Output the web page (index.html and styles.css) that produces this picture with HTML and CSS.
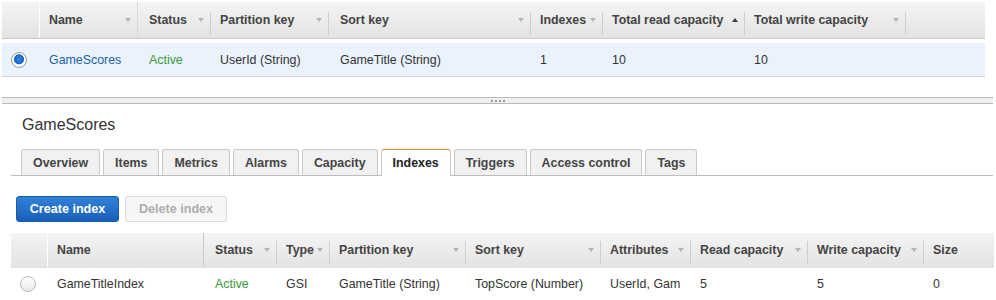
FILE: index.html
```html
<!DOCTYPE html>
<html>
<head>
<meta charset="utf-8">
<link rel="stylesheet" href="styles.css">
</head>
<body>
<div class="grid top">
  <div class="thead">
    <div class="c t0"><span class="lbl"></span><span class="sep white"></span></div>
    <div class="c t1"><span class="lbl">Name</span><span class="caret"></span><span class="sep full"></span></div>
    <div class="c t2"><span class="lbl p11">Status</span><span class="caret"></span><span class="sep"></span></div>
    <div class="c t3"><span class="lbl">Partition key</span><span class="caret"></span><span class="sep"></span></div>
    <div class="c t4"><span class="lbl p11">Sort key</span><span class="caret"></span><span class="sep"></span></div>
    <div class="c t5"><span class="lbl">Indexes</span><span class="caret"></span><span class="sep"></span></div>
    <div class="c t6"><span class="lbl">Total read capacity</span><span class="caret up"></span><span class="sep"></span></div>
    <div class="c t7"><span class="lbl">Total write capacity</span><span class="caret"></span><span class="sep"></span></div>
    <div class="c rest"></div>
  </div>
  <div class="trow selected">
    <div class="c t0"><span class="radio on"></span></div>
    <div class="c t1"><span class="val link">GameScores</span></div>
    <div class="c t2"><span class="val p11 ok">Active</span></div>
    <div class="c t3"><span class="val">UserId (String)</span></div>
    <div class="c t4"><span class="val p11">GameTitle (String)</span></div>
    <div class="c t5"><span class="val">1</span></div>
    <div class="c t6"><span class="val">10</span></div>
    <div class="c t7"><span class="val">10</span></div>
    <div class="c rest"></div>
  </div>
</div>

<div class="divider"><span class="grip"></span></div>

<h2 class="title">GameScores</h2>

<div class="tabs">
  <span class="tab">Overview</span>
  <span class="tab">Items</span>
  <span class="tab">Metrics</span>
  <span class="tab">Alarms</span>
  <span class="tab">Capacity</span>
  <span class="tab active">Indexes</span>
  <span class="tab">Triggers</span>
  <span class="tab">Access control</span>
  <span class="tab">Tags</span>
</div>

<div class="actions">
  <button class="btn primary">Create index</button>
  <button class="btn disabled">Delete index</button>
</div>

<div class="grid bottom">
  <div class="thead">
    <div class="c b0"><span class="lbl"></span><span class="sep white"></span></div>
    <div class="c b1"><span class="lbl">Name</span><span class="sep full gray"></span></div>
    <div class="c b2"><span class="lbl p11">Status</span><span class="caret"></span><span class="sep"></span></div>
    <div class="c b3"><span class="lbl">Type</span><span class="caret"></span><span class="sep"></span></div>
    <div class="c b4"><span class="lbl">Partition key</span><span class="caret"></span><span class="sep"></span></div>
    <div class="c b5"><span class="lbl">Sort key</span><span class="caret"></span><span class="sep"></span></div>
    <div class="c b6"><span class="lbl">Attributes</span><span class="caret"></span><span class="sep"></span></div>
    <div class="c b7"><span class="lbl">Read capacity</span><span class="caret"></span><span class="sep"></span></div>
    <div class="c b8"><span class="lbl">Write capacity</span><span class="caret"></span><span class="sep"></span></div>
    <div class="c rest"><span class="lbl">Size</span></div>
  </div>
  <div class="trow plain">
    <div class="c b0"><span class="radio"></span></div>
    <div class="c b1"><span class="val">GameTitleIndex</span></div>
    <div class="c b2"><span class="val p11 ok">Active</span></div>
    <div class="c b3"><span class="val">GSI</span></div>
    <div class="c b4"><span class="val">GameTitle (String)</span></div>
    <div class="c b5"><span class="val">TopScore (Number)</span></div>
    <div class="c b6"><span class="val">UserId, Gam</span></div>
    <div class="c b7"><span class="val">5</span></div>
    <div class="c b8"><span class="val">5</span></div>
    <div class="c rest"><span class="val">0</span></div>
  </div>
</div>
</body>
</html>
```

FILE: styles.css
```css
* { box-sizing: border-box; }
html, body { margin: 0; padding: 0; background: #fff; }
body {
  font-family: "Liberation Sans", Arial, sans-serif;
  font-size: 12.4px;
  color: #333;
  width: 996px;
  height: 300px;
  overflow: hidden;
}

.grid.top { margin: 2px 0 0 2px; width: 983px; }
.grid.bottom { margin: 11px 0 0 11px; width: 983px; }

.thead {
  display: flex;
  background: linear-gradient(#f4f4f4, #e3e3e3);
}
.top .thead { height: 37px; border-bottom: 1px solid #c9c9c9; }
.bottom .thead { height: 35px; border-bottom: 1px solid #e0e0e0; }

.trow { display: flex; }
.top .trow { margin-top: 4px; height: 34px; border-bottom: 1px solid #d6d6d6; }
.trow.selected { background: #eaf3fd; }
.bottom .trow { height: 32px; }

.c { display: flex; align-items: center; flex: none; min-width: 0; }
.rest { flex: 1; }

.t0 { width: 38px; }
.t1 { width: 98px; }
.t2 { width: 73px; }
.t3 { width: 118px; }
.t4 { width: 202px; }
.t5 { width: 72px; }
.t6 { width: 142px; }
.t7 { width: 161px; }

.b0 { width: 37px; }
.b1 { width: 156px; }
.b2 { width: 73px; }
.b3 { width: 53px; }
.b4 { width: 136px; }
.b5 { width: 135px; }
.b6 { width: 90px; }
.b7 { width: 117px; }
.b8 { width: 116px; }

.lbl {
  flex: 1;
  padding-left: 9px;
  font-weight: bold;
  color: #444;
  white-space: nowrap;
  overflow: hidden;
}
.p11 { padding-left: 11px; }

.caret {
  width: 0; height: 0;
  border-left: 3.5px solid transparent;
  border-right: 3.5px solid transparent;
  border-top: 4px solid #b4b4b4;
  margin-right: 6px;
  flex: none;
}
.caret.up {
  border-top: 0;
  border-bottom: 4px solid #3a3a3a;
}

.sep {
  flex: none;
  width: 1px;
  height: 23px;
  align-self: flex-end;
  margin-bottom: 3px;
  background: #cdcdcd;
}
.sep.full { align-self: stretch; height: auto; margin-bottom: 0; background: #d9d9d9; }
.sep.white { align-self: stretch; height: auto; margin-bottom: 0; background: #fff; }
.sep.gray { background: #c9c9c9; }

.val {
  padding-left: 9px;
  white-space: nowrap;
  color: #333;
}
.val.p11 { padding-left: 11px; }
.link { color: #2561a8; }
.ok { color: #3a9a3a; }

.radio {
  display: block;
  width: 16px;
  height: 16px;
  margin-left: 9px;
  border-radius: 50%;
  border: 1px solid #b9b9b9;
  background: linear-gradient(#ffffff, #e9e9e9);
}
.radio.on {
  margin-left: 9px;
  border-color: #9b9b9b;
  background: radial-gradient(circle at 50% 45%, #3d8ae0 0, #1764c8 4.6px, #ffffff 5.4px);
}

.divider {
  margin: 20px 0 0 2px;
  width: 991px;
  height: 7px;
  border-top: 1px solid #b9b9b9;
  border-bottom: 1px solid #b9b9b9;
  background: #f0f0f0;
  display: flex;
  justify-content: center;
  align-items: center;
}
.grip {
  width: 16px;
  height: 2px;
  background: radial-gradient(circle, #9a9a9a 0.8px, transparent 1.1px) 0 0 / 4px 2px repeat-x;
}

.title {
  margin: 11px 0 0 22px;
  font-size: 16px;
  line-height: 20px;
  font-weight: normal;
  color: #333;
}

.tabs {
  display: flex;
  gap: 3px;
  margin: 14px 3px 0 11px;
  padding-left: 10px;
  border-bottom: 1px solid #bdbdbd;
  height: 27px;
}
.tab {
  display: block;
  height: 26px;
  padding: 2px 11px 0;
  line-height: 23px;
  border: 1px solid #c9c9c9;
  border-bottom: 0;
  border-radius: 3px 3px 0 0;
  background: #f1f1f1;
  font-weight: bold;
  color: #444;
  white-space: nowrap;
}
.tab.active {
  background: #fff;
  border-top: 1px solid #e8902e;
  height: 27px;
  color: #222;
}

.actions {
  display: flex;
  gap: 6px;
  margin: 20px 0 0 16px;
}
.btn {
  font-family: "Liberation Sans", Arial, sans-serif;
  font-size: 12.6px;
  font-weight: bold;
  height: 26px;
  padding: 0 12px;
  border-radius: 3px;
  line-height: 24px;
}
.btn.primary {
  width: 103px;
  color: #fff;
  border: 1px solid #1b5aa8;
  background: linear-gradient(#3182d9, #1a5eb8);
}
.btn.disabled {
  width: 102px;
  color: #aeaeae;
  border: 1px solid #dcdcdc;
  background: #f6f6f6;
}
```
